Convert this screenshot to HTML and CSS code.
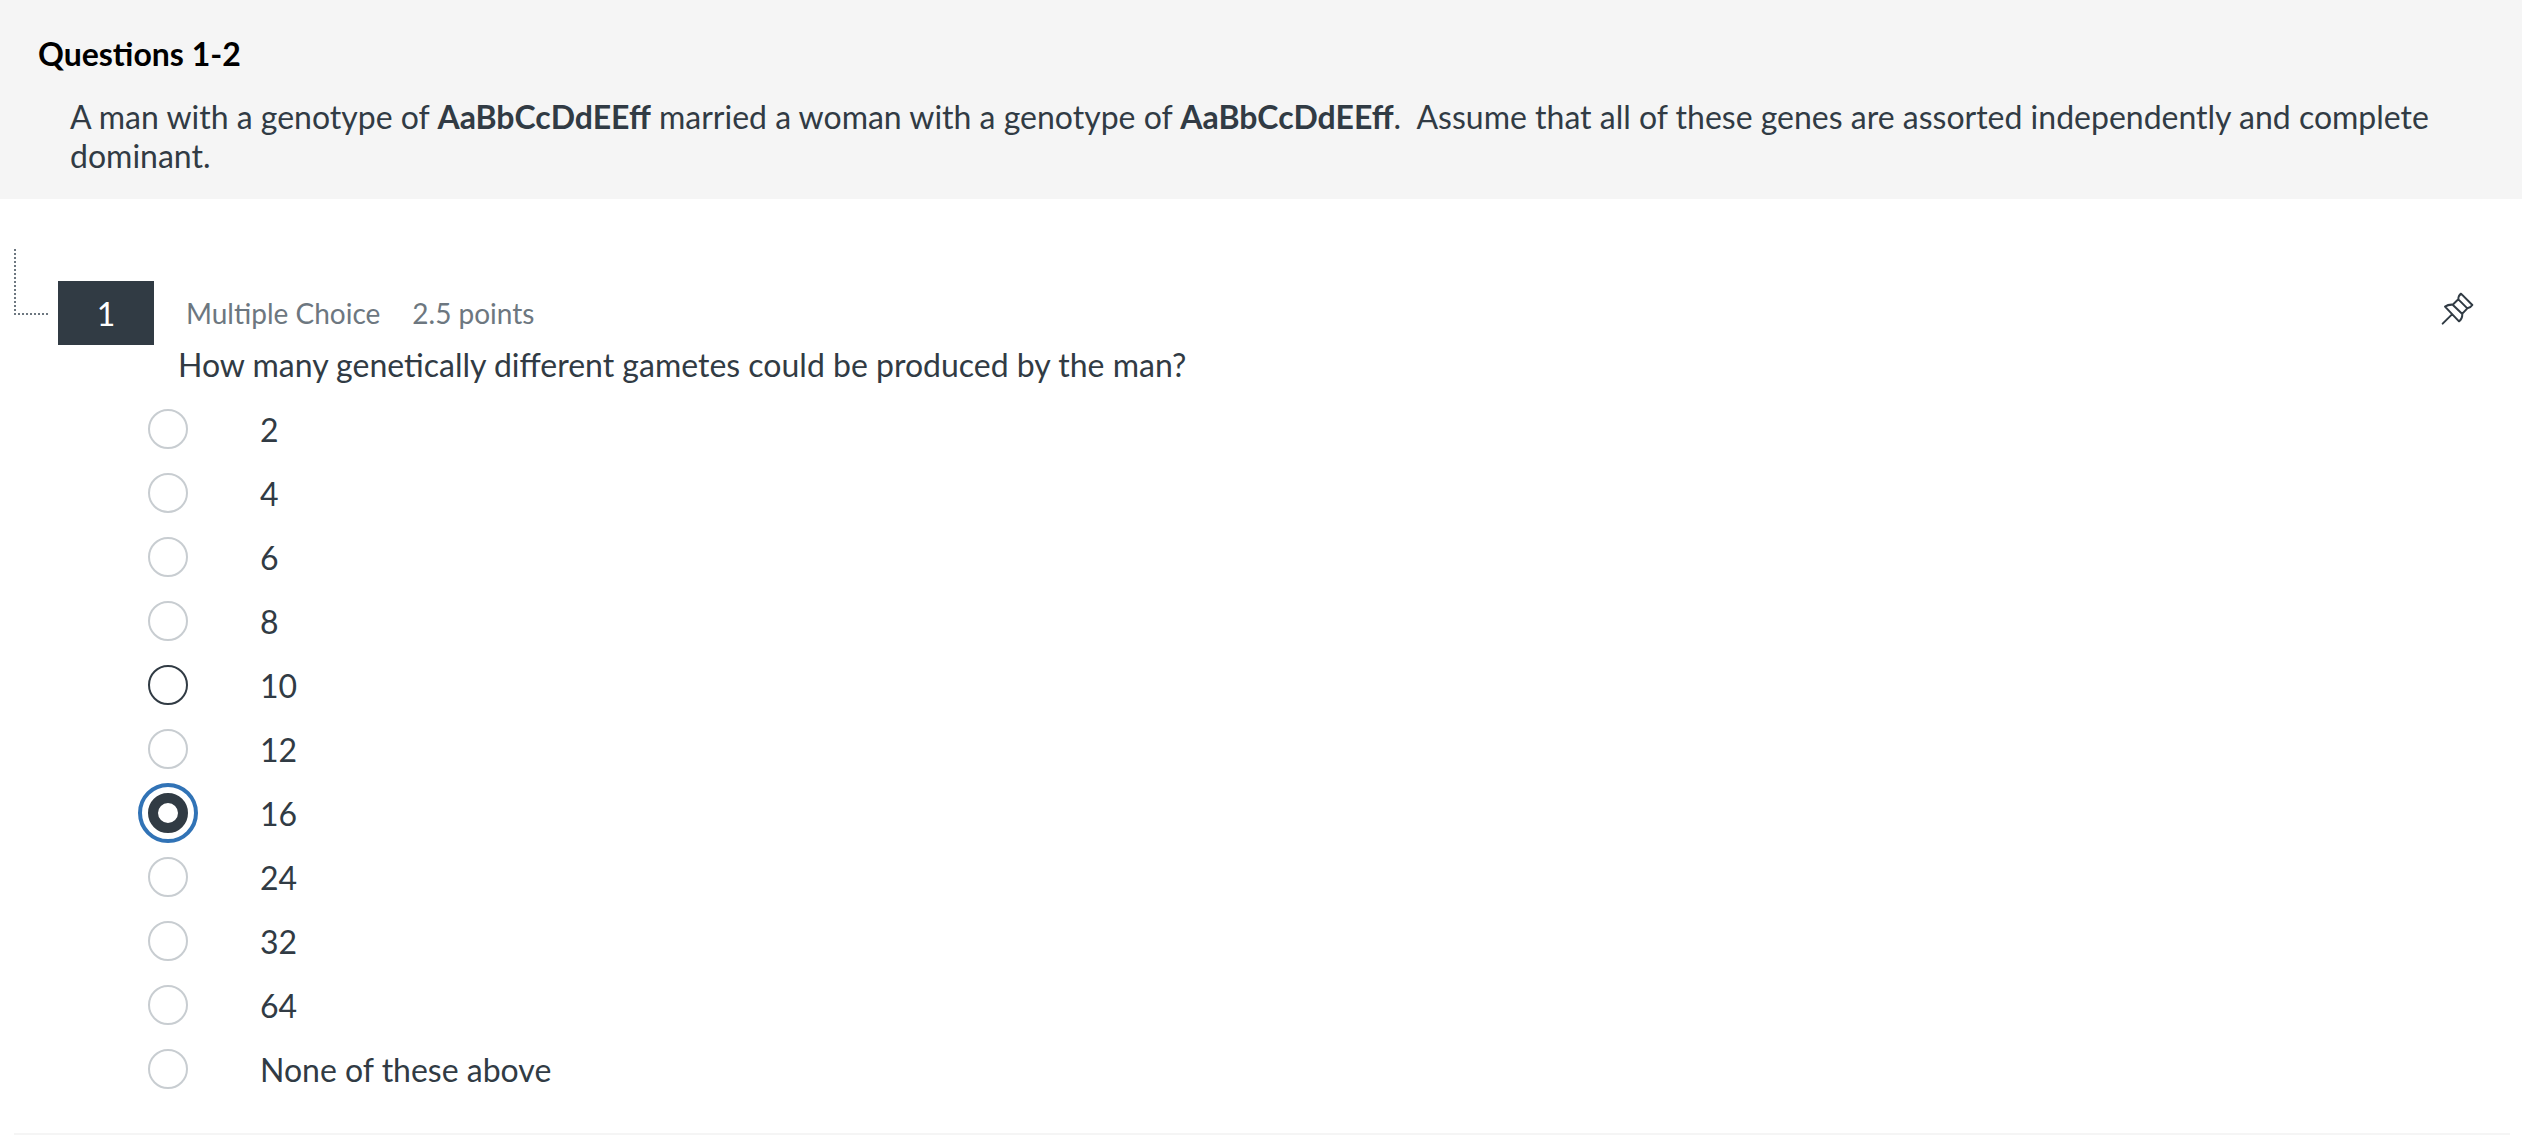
FILE: index.html
```html
<!DOCTYPE html>
<html lang="en">
<head>
<meta charset="utf-8">
<title>Questions 1-2</title>
<link rel="stylesheet" href="styles.css">
</head>
<body>
<header class="stimulus">
  <h1 class="stimulus-title">Questions 1-2</h1>
  <p class="stimulus-text">A man with a genotype of <strong>AaBbCcDdEEff</strong> married a woman with a genotype of <strong>AaBbCcDdEEff</strong>.&nbsp; Assume that all of these genes are assorted independently and complete dominant.</p>
</header>
<main class="question">
  <div class="question-bar">
    <span class="connector"></span>
    <span class="number">1</span>
    <div class="meta"><span>Multiple Choice</span><span>2.5 points</span></div>
    <button class="pin" type="button" aria-label="Pin question">
      <svg class="pin-icon" viewBox="60 60 108 108" aria-hidden="true">
        <path d="M68 161L96 133M75 110Q85 103 98 104L127 132Q127 147 117 154ZM98 104L115 88M127 131L142 115M115 88Q115 77 123 71L157 105Q152 113 142 115Z"/>
      </svg>
    </button>
  </div>
  <fieldset class="answers">
    <legend class="prompt">How many genetically different gametes could be produced by the man?</legend>
    <label class="choice"><input class="radio" type="radio" name="q1"><span>2</span></label>
    <label class="choice"><input class="radio" type="radio" name="q1"><span>4</span></label>
    <label class="choice"><input class="radio" type="radio" name="q1"><span>6</span></label>
    <label class="choice"><input class="radio" type="radio" name="q1"><span>8</span></label>
    <label class="choice"><input class="radio radio-hover" type="radio" name="q1"><span>10</span></label>
    <label class="choice"><input class="radio" type="radio" name="q1"><span>12</span></label>
    <label class="choice"><input class="radio" type="radio" name="q1" checked><span>16</span></label>
    <label class="choice"><input class="radio" type="radio" name="q1"><span>24</span></label>
    <label class="choice"><input class="radio" type="radio" name="q1"><span>32</span></label>
    <label class="choice"><input class="radio" type="radio" name="q1"><span>64</span></label>
    <label class="choice"><input class="radio" type="radio" name="q1"><span>None of these above</span></label>
  </fieldset>
</main>
</body>
</html>
```
FILE: styles.css
```css
* {
  box-sizing: border-box;
}

body {
  margin: 0;
  background: #fff;
  color: #313b44;
  font-family: Lato, sans-serif;
  font-size: 32px;
  line-height: 39px;
}

.stimulus {
  padding: 34px 70px 24px;
  background: #f5f5f5;
}

.stimulus-title {
  margin: 0 0 24px -32px;
  color: #000;
  font-size: 32px;
  font-weight: 700;
}

.stimulus-text {
  margin: 0;
}

.question {
  margin: 50px 12px 0 14px;
  padding-bottom: 32px;
  border-bottom: 2px solid #f5f5f5;
}

.question-bar {
  display: flex;
  align-items: flex-end;
  padding-right: 34px;
}

.connector {
  width: 34px;
  height: 66px;
  margin: 0 10px 30px 0;
  border: dotted #6d7780;
  border-width: 0 0 2px 2px;
}

.number {
  display: grid;
  place-items: center;
  width: 96px;
  height: 64px;
  background: #313b44;
  color: #fff;
}

.meta {
  display: flex;
  flex: 1;
  gap: 32px;
  padding-left: 32px;
  color: #6d7780;
  font-size: 28px;
  line-height: 64px;
}

.pin {
  display: flex;
  margin-bottom: 19px;
  padding: 0;
  border: 0;
  background: none;
  color: inherit;
  cursor: pointer;
}

.pin-icon {
  width: 36px;
  height: 36px;
  fill: none;
  stroke: currentColor;
  stroke-width: 6;
  stroke-linecap: round;
  stroke-linejoin: round;
}

.answers {
  margin: 0;
  padding: 0 0 0 134px;
  border: 0;
}

.prompt {
  margin-left: 30px;
  padding: 0 0 13px;
}

.choice {
  display: flex;
  align-items: center;
  gap: 72px;
  height: 64px;
}

.radio {
  appearance: none;
  flex: none;
  width: 40px;
  height: 40px;
  margin: 0;
  border: 2px solid #c8cdd1;
  border-radius: 50%;
  background: #fff;
}

.radio-hover,
.radio:hover {
  border-color: #313b44;
}

.radio:checked {
  border: 10px solid #313b44;
  outline: 4px solid #3173b6;
  outline-offset: 6px;
}
```
